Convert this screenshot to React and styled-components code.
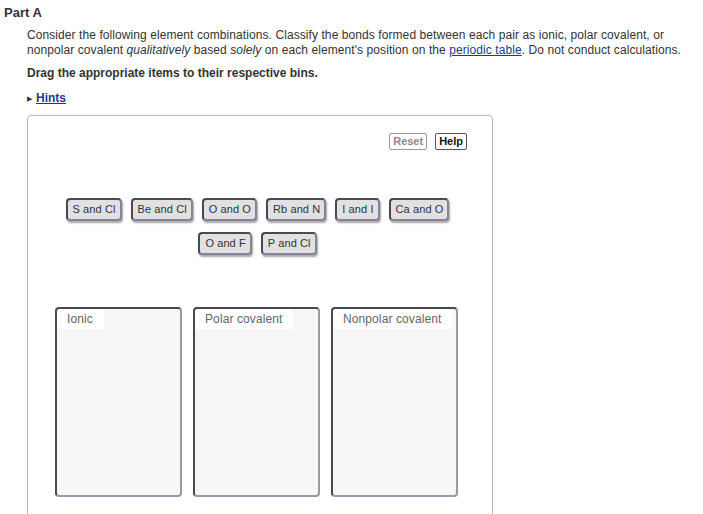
import React from "react";
import styled, { createGlobalStyle } from "styled-components";

const Global = createGlobalStyle`
  html, body {
    margin: 0;
    padding: 0;
    background: #fff;
  }
  body {
    font-family: "Liberation Sans", Arial, sans-serif;
    color: #333;
  }
`;

const Page = styled.div`
  padding: 5px 0 0 4px;
  height: 514px;
  overflow: hidden;
  box-sizing: border-box;
`;

const PartTitle = styled.h3`
  margin: 0;
  font-size: 13px;
  line-height: 16px;
  font-weight: bold;
  color: #333;
`;

const Content = styled.div`
  margin: 7px 0 0 23px;
`;

const Para = styled.p`
  margin: 0;
  font-size: 12px;
  line-height: 15px;
  letter-spacing: 0.08px;
  width: 670px;
`;

const Instruction = styled.p`
  margin: 8px 0 0;
  font-size: 12px;
  line-height: 15px;
  font-weight: bold;
`;

const Link = styled.a`
  color: #1d3b8e;
  text-decoration: underline;
  font-weight: ${(p) => (p.$bold ? "bold" : "normal")};
`;

const Hints = styled.div`
  margin-top: 10px;
  font-size: 12px;
  line-height: 15px;
  display: flex;
  align-items: center;
  gap: 4px;
`;

const Caret = styled.span`
  font-size: 7px;
  color: #333;
  width: 5px;
`;

const Board = styled.div`
  margin-top: 9px;
  width: 464px;
  border: 1px solid #bbb;
  border-radius: 4px;
  padding: 17px 0 40px;
`;

const Toolbar = styled.div`
  display: flex;
  justify-content: flex-end;
  gap: 8px;
  padding-right: 25px;
`;

const ToolButton = styled.button`
  height: 17px;
  padding: 0 3px;
  background: #fff;
  border: 1px solid ${(p) => (p.$disabled ? "#9a9a9a" : "#555")};
  border-radius: 2px;
  font-family: "Liberation Sans", Arial, sans-serif;
  font-size: 11px;
  font-weight: bold;
  color: ${(p) => (p.$disabled ? "#8a8a8a" : "#111")};
  line-height: 15px;
`;

const Tray = styled.div`
  margin-top: 48px;
  display: flex;
  flex-wrap: wrap;
  justify-content: center;
  gap: 11px 9px;
  padding: 0 35px 0 30px;
`;

const Tile = styled.div`
  height: 19px;
  line-height: 19px;
  padding: 0 4px 0 5px;
  background: #e1e1e1;
  border: 2px solid;
  border-color: #4b4a52 #85829a #85829a #4b4a52;
  border-radius: 4px;
  box-shadow: 1px 2px 2px rgba(0, 0, 0, 0.35);
  font-size: 11px;
  letter-spacing: 0.1px;
  color: #333;
  white-space: nowrap;
`;

const Bins = styled.div`
  margin-top: 52px;
  display: flex;
  gap: 11px;
  padding-left: 27px;
`;

const Bin = styled.div`
  width: 123px;
  height: 186px;
  background: #f7f7f7;
  border: 2px solid;
  border-color: #4b4a52 #9b98aa #9b98aa #4b4a52;
  border-radius: 4px;
`;

const BinLabel = styled.div`
  display: inline-block;
  background: #fff;
  padding: 0 11px 0 10px;
  height: 19px;
  line-height: 18px;
  font-size: 12px;
  letter-spacing: 0.1px;
  color: #666;
`;

const tiles = [
  "S and Cl",
  "Be and Cl",
  "O and O",
  "Rb and N",
  "I and I",
  "Ca and O",
  "O and F",
  "P and Cl",
];

const bins = ["Ionic", "Polar covalent", "Nonpolar covalent"];

export default function App() {
  return (
    <Page>
      <Global />
      <PartTitle>Part A</PartTitle>
      <Content>
        <Para>
          Consider the following element combinations. Classify the bonds
          formed between each pair as ionic, polar covalent, or nonpolar
          covalent <i>qualitatively</i> based <i>solely</i> on each element's
          position on the <Link href="#">periodic table</Link>. Do not conduct
          calculations.
        </Para>
        <Instruction>Drag the appropriate items to their respective bins.</Instruction>
        <Hints>
          <Caret>▶</Caret>
          <Link href="#" $bold>
            Hints
          </Link>
        </Hints>
        <Board>
          <Toolbar>
            <ToolButton $disabled>Reset</ToolButton>
            <ToolButton>Help</ToolButton>
          </Toolbar>
          <Tray>
            {tiles.map((t) => (
              <Tile key={t}>{t}</Tile>
            ))}
          </Tray>
          <Bins>
            {bins.map((b) => (
              <Bin key={b}>
                <BinLabel>{b}</BinLabel>
              </Bin>
            ))}
          </Bins>
        </Board>
      </Content>
    </Page>
  );
}
